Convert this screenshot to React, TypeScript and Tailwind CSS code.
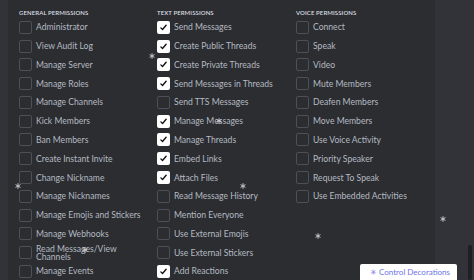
import React from 'react';

type Perm = { label: string; checked?: boolean };

const general: Perm[] = [
  { label: 'Administrator' },
  { label: 'View Audit Log' },
  { label: 'Manage Server' },
  { label: 'Manage Roles' },
  { label: 'Manage Channels' },
  { label: 'Kick Members' },
  { label: 'Ban Members' },
  { label: 'Create Instant Invite' },
  { label: 'Change Nickname' },
  { label: 'Manage Nicknames' },
  { label: 'Manage Emojis and Stickers' },
  { label: 'Manage Webhooks' },
  { label: 'Read Messages/View Channels' },
  { label: 'Manage Events' },
];

const text: Perm[] = [
  { label: 'Send Messages', checked: true },
  { label: 'Create Public Threads', checked: true },
  { label: 'Create Private Threads', checked: true },
  { label: 'Send Messages in Threads', checked: true },
  { label: 'Send TTS Messages' },
  { label: 'Manage Messages', checked: true },
  { label: 'Manage Threads', checked: true },
  { label: 'Embed Links', checked: true },
  { label: 'Attach Files', checked: true },
  { label: 'Read Message History' },
  { label: 'Mention Everyone' },
  { label: 'Use External Emojis' },
  { label: 'Use External Stickers' },
  { label: 'Add Reactions', checked: true },
];

const voice: Perm[] = [
  { label: 'Connect' },
  { label: 'Speak' },
  { label: 'Video' },
  { label: 'Mute Members' },
  { label: 'Deafen Members' },
  { label: 'Move Members' },
  { label: 'Use Voice Activity' },
  { label: 'Priority Speaker' },
  { label: 'Request To Speak' },
  { label: 'Use Embedded Activities' },
];

const Sparkle = ({ className }: { className: string }) => (
  <svg viewBox="0 0 10 10" className={`absolute h-[6px] w-[6px] ${className}`}>
    <g stroke="#c9ccd1" strokeWidth="1.6" strokeLinecap="round">
      <path d="M5 1v8M1.5 3l7 4M1.5 7l7-4" />
    </g>
  </svg>
);

const Checkbox = ({ checked }: { checked?: boolean }) =>
  checked ? (
    <div className="flex h-[13px] w-[13px] shrink-0 items-center justify-center rounded-[2px] bg-white">
      <svg viewBox="0 0 12 12" className="h-[9px] w-[9px]">
        <path d="M2.5 6.5l2.2 2.2L9.5 3" fill="none" stroke="#111" strokeWidth="1.8" strokeLinecap="round" strokeLinejoin="round" />
      </svg>
    </div>
  ) : (
    <div className="h-[13px] w-[13px] shrink-0 rounded-[2px] border border-[#4e5058]" />
  );

const Column = ({ title, items }: { title: string; items: Perm[] }) => (
  <div className="flex flex-col">
    <div className="h-[18px] pt-[10px] text-[6px] font-semibold uppercase leading-[6px] tracking-[0.1px] text-[#dbdee1]">
      {title}
    </div>
    {items.map((p) => (
      <div key={p.label} className="flex h-[18.77px] items-center gap-[4px]">
        <Checkbox checked={p.checked} />
        <span className="w-[110px] text-[8.6px] leading-[8px] text-[#b5bac1]">{p.label}</span>
      </div>
    ))}
  </div>
);

export default function App() {
  return (
    <div
      className="relative flex h-[280px] w-[474px] overflow-hidden bg-[#313338]"
      style={{ fontFamily: 'Lato, "Noto Sans", sans-serif' }}
    >
      <div className="w-[8px] shrink-0" />
      <div className="grid w-[427px] shrink-0 grid-cols-[138px_139px_139px] bg-[#2b2d31] pl-[11px]">
        <Column title="General Permissions" items={general} />
        <Column title="Text Permissions" items={text} />
        <Column title="Voice Permissions" items={voice} />
      </div>
      <div className="flex-1" />

      <Sparkle className="left-[149px] top-[53px]" />
      <Sparkle className="left-[216px] top-[118px]" />
      <Sparkle className="left-[240px] top-[183px]" />
      <Sparkle className="left-[15px] top-[183px]" />
      <Sparkle className="left-[82px] top-[247px]" />
      <Sparkle className="left-[315px] top-[233px]" />
      <Sparkle className="left-[440px] top-[216px]" />

      <div className="absolute right-[2px] top-[245px] h-[35px] w-[4px] rounded-full bg-[#1e1f22]" />

      <div className="absolute left-[360px] top-[264px] flex h-[20px] w-[97px] items-start rounded-t-[2px] bg-white pl-[10px] pt-[4px] text-[8px] leading-[9px] text-[#6b74e8]">
        ✳ Control Decorations
      </div>
    </div>
  );
}
